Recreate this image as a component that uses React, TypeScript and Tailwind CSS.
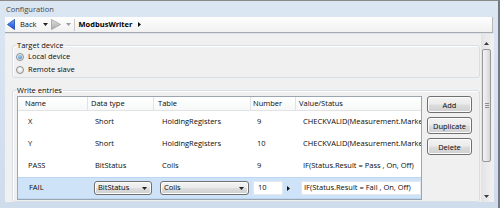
import React from "react";

const btn =
  "bg-[linear-gradient(to_bottom,#f3f3f3_0%,#ebebeb_48%,#dddddd_52%,#cfcfcf_100%)] border border-[#707070] rounded-[3px] shadow-[inset_0_0_0_1px_#fcfcfc]";

function Caret({ color = "#222" }: { color?: string }) {
  return (
    <svg width="5" height="3" viewBox="0 0 5 3">
      <polygon points="0,0 5,0 2.5,3" fill={color} />
    </svg>
  );
}

function Toolbar() {
  return (
    <div className="ml-[5px] w-[488px] h-[16px] shrink-0 flex items-center bg-[linear-gradient(to_bottom,#fefefe,#f1f1f1)] border-b border-b-[#a9a9a9] border-r border-r-[#b8b8b8]">
      <svg className="ml-[2px]" width="8" height="11" viewBox="0 0 8 11">
        <defs>
          <linearGradient id="bk" x1="0" y1="0" x2="0" y2="1">
            <stop offset="0" stopColor="#7fb0ff" />
            <stop offset="0.5" stopColor="#3b78ea" />
            <stop offset="1" stopColor="#1b49c4" />
          </linearGradient>
        </defs>
        <polygon points="0.5,5.5 7.5,0.5 7.5,10.5" fill="url(#bk)" stroke="#1e44a8" strokeWidth="0.8" strokeLinejoin="round" />
      </svg>
      <span className="ml-[5px] text-[#111]">Back</span>
      <span className="ml-[6px] flex"><Caret /></span>
      <svg className="ml-[3px]" width="10" height="11" viewBox="0 0 10 11">
        <defs>
          <linearGradient id="fw" x1="0" y1="0" x2="0" y2="1">
            <stop offset="0" stopColor="#e2e2e2" />
            <stop offset="1" stopColor="#a9a9a9" />
          </linearGradient>
        </defs>
        <polygon points="0.5,0.5 9.5,5.5 0.5,10.5" fill="url(#fw)" stroke="#a0a0a0" strokeWidth="0.8" strokeLinejoin="round" />
      </svg>
      <span className="ml-[5px] flex"><Caret color="#9a9a9a" /></span>
      <div className="ml-[3px] w-px h-[12px] bg-[#c9c9c9]" />
      <span className="ml-[4px] font-bold text-[#000]">ModbusWriter</span>
      <svg className="ml-[6px]" width="3" height="5" viewBox="0 0 3 5">
        <polygon points="0,0 3,2.5 0,5" fill="#111" />
      </svg>
    </div>
  );
}

function Radio({ checked, label }: { checked?: boolean; label: string }) {
  return (
    <div className="h-[13px] flex items-center">
      <div className="w-[8px] h-[8px] rounded-full border border-[#8e8f8f] bg-[radial-gradient(circle_at_50%_35%,#ffffff,#d6d6d6)] flex items-center justify-center">
        {checked && (
          <div className="w-[4px] h-[4px] rounded-full bg-[radial-gradient(circle_at_40%_35%,#9fd8ff,#1b6fc4)]" />
        )}
      </div>
      <span className="ml-[4px]">{label}</span>
    </div>
  );
}

function Combo({ w, text, ml }: { w: string; text: string; ml: string }) {
  return (
    <div className={`${w} ${ml} h-[14px] ${btn} rounded-[2px] flex items-center pl-[3px] pr-[4px]`}>
      <span className="flex-1">{text}</span>
      <Caret />
    </div>
  );
}

const rows = [
  { n: "X", t: "Short", tb: "HoldingRegisters", num: "9", v: "CHECKVALID(Measurement.Marker1.Value)" },
  { n: "Y", t: "Short", tb: "HoldingRegisters", num: "10", v: "CHECKVALID(Measurement.Marker2.Value)" },
  { n: "PASS", t: "BitStatus", tb: "Coils", num: "9", v: "IF(Status.Result = Pass , On, Off)" },
];

function Grid() {
  return (
    <div className="w-[405px] h-[104px] border border-[#9ca6b0] bg-white flex flex-col overflow-hidden">
      <div className="h-[14px] shrink-0 flex border-b border-b-[#e3e3e3] bg-[linear-gradient(to_bottom,#ffffff,#f7f8f9)]">
        <div className="w-[69px] pl-[7px] flex items-center">Name</div>
        <div className="w-[66px] pl-[3px] border-l border-l-[#e2e3e4] flex items-center">Data type</div>
        <div className="w-[97px] pl-[4px] border-l border-l-[#e2e3e4] flex items-center">Table</div>
        <div className="w-[45px] pl-[2px] border-l border-l-[#e2e3e4] flex items-center">Number</div>
        <div className="w-[126px] pl-[3px] border-l border-l-[#e2e3e4] flex items-center">Value/Status</div>
      </div>
      {rows.map((r) => (
        <div key={r.n} className="h-[22px] shrink-0 flex items-center whitespace-nowrap">
          <div className="w-[69px] pl-[10px]">{r.n}</div>
          <div className="w-[66px] pl-[8px]">{r.t}</div>
          <div className="w-[97px] pl-[9px]">{r.tb}</div>
          <div className="w-[45px] pl-[7px]">{r.num}</div>
          <div className="w-[126px] pl-[8px] overflow-hidden">{r.v}</div>
        </div>
      ))}
      <div className="h-[22px] shrink-0 flex items-center whitespace-nowrap bg-[#cfe3f8] border-y border-y-[#bcd7f3]">
        <div className="w-[69px] pl-[11px]">FAIL</div>
        <div className="w-[66px] flex">
          <Combo w="w-[58px]" ml="ml-[7px]" text="BitStatus" />
        </div>
        <div className="w-[97px] flex">
          <Combo w="w-[89px]" ml="ml-[7px]" text="Coils" />
        </div>
        <div className="w-[45px] flex items-center">
          <div className="ml-[3px] w-[30px] h-[14px] bg-white border border-[#e3e9ef] pl-[4px] flex items-center">10</div>
          <svg className="ml-[4px]" width="3" height="5" viewBox="0 0 3 5">
            <polygon points="0,0 3,2.5 0,5" fill="#111" />
          </svg>
        </div>
        <div className="w-[126px] flex">
          <div className="ml-[6px] w-[120px] h-[14px] bg-white border border-[#e3e9ef] pl-[2px] flex items-center overflow-hidden">
            IF(Status.Result = Fail , On, Off)
          </div>
        </div>
      </div>
    </div>
  );
}

function Scrollbar() {
  return (
    <div className="w-[11px] h-full bg-[linear-gradient(to_right,#e3e3e3,#f0f0f0)] flex flex-col items-center">
      <div className="h-[15px] shrink-0 flex items-end pb-[4px]">
        <svg width="5" height="3" viewBox="0 0 5 3">
          <polygon points="0,3 5,3 2.5,0" fill="#3a3a3a" />
        </svg>
      </div>
      <div className="w-[9px] h-[113px] shrink-0 rounded-[2px] border border-[#979797] bg-[linear-gradient(to_right,#f4f4f4,#e7e7e7_50%,#d6d6d6)] flex flex-col items-center justify-center gap-[1px]">
        <div className="w-[4px] h-px bg-[#8f8f8f]" />
        <div className="w-[4px] h-px bg-[#8f8f8f]" />
        <div className="w-[4px] h-px bg-[#8f8f8f]" />
      </div>
      <div className="flex-1" />
      <div className="h-[12px] shrink-0 flex items-center">
        <svg width="5" height="3" viewBox="0 0 5 3">
          <polygon points="0,0 5,0 2.5,3" fill="#3a3a3a" />
        </svg>
      </div>
    </div>
  );
}

function Content() {
  return (
    <div className="ml-[5px] mt-[1px] w-[489px] h-[168px] shrink-0 bg-[#f0f0f0] flex overflow-hidden">
      <div className="w-[476px] pl-[7px] pt-[6px] flex flex-col">
        <fieldset className="w-[468px] border border-[#d5dfe5] rounded-[3px] shadow-[inset_1px_1px_0_#ffffff] pl-[3px] pb-[1px]">
          <legend className="px-[1px] leading-[10px] h-[10px]">Target device</legend>
          <Radio checked label="Local device" />
          <Radio label="Remote slave" />
        </fieldset>
        <fieldset className="mt-[7px] w-[468px] border border-[#d5dfe5] rounded-[3px] shadow-[inset_1px_1px_0_#ffffff] pl-[4px] pt-[1px] pb-[1px]">
          <legend className="-ml-[1px] px-[1px] leading-[10px] h-[10px]">Write entries</legend>
          <div className="flex">
            <Grid />
            <div className="ml-[5px] flex flex-col gap-[4px]">
              <button className={`w-[45px] h-[17px] ${btn} flex items-center justify-center leading-[10px]`}>Add</button>
              <button className={`w-[45px] h-[17px] ${btn} flex items-center justify-center leading-[10px]`}>Duplicate</button>
              <button className={`w-[45px] h-[17px] ${btn} flex items-center justify-center leading-[10px]`}>Delete</button>
            </div>
          </div>
        </fieldset>
      </div>
      <Scrollbar />
    </div>
  );
}

export default function App() {
  return (
    <div className="w-[500px] h-[208px] overflow-hidden bg-[linear-gradient(to_bottom,#dbe6f3,#cfdcec)] border-t border-t-[#8a8a8a] border-r-2 border-r-[#737980] font-['Open_Sans',sans-serif] text-[7.5px] leading-none text-[#0a0a0a] flex flex-col">
      <div className="h-[16px] shrink-0 pl-[6px] pt-[2px] flex items-center text-[#444]">Configuration</div>
      <Toolbar />
      <Content />
    </div>
  );
}
